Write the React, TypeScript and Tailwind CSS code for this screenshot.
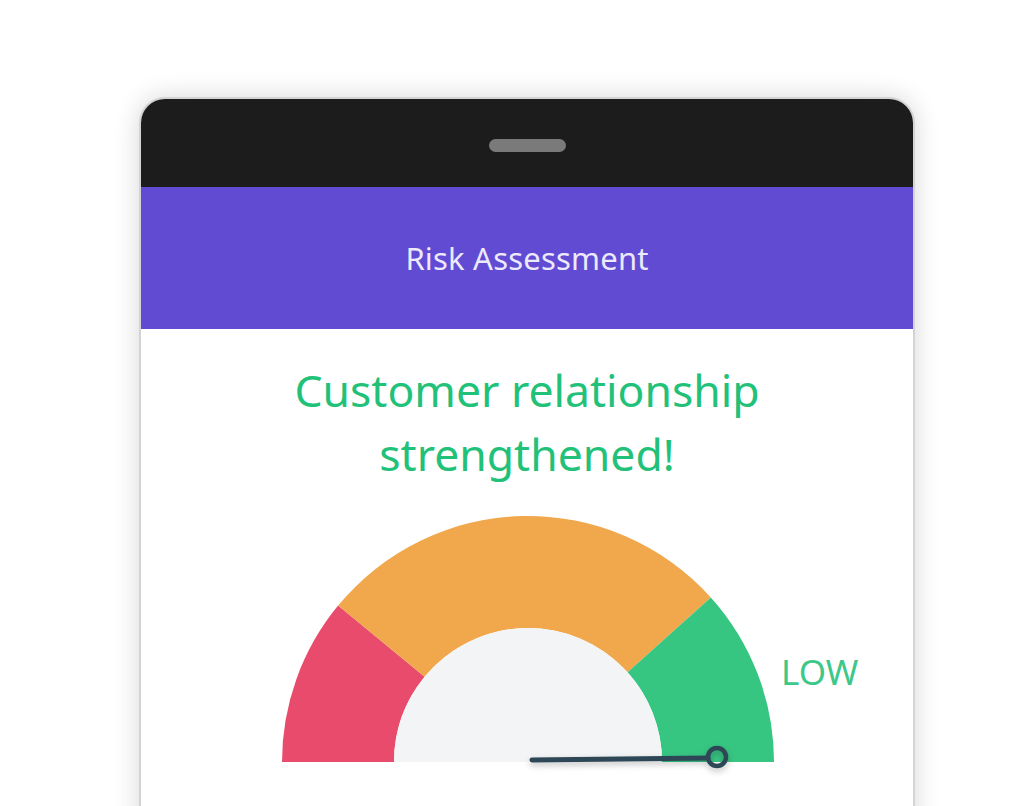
export default function App() {
  return (
    <div className="h-[806px] w-[1024px] overflow-hidden bg-white pt-[97px] font-['Noto_Sans',sans-serif]">
      <div className="ml-[139px] w-[776px] h-[760px] rounded-t-[26px] border-2 border-b-0 border-[#d4d4d4] shadow-[0_0_26px_rgba(0,0,0,0.16)] overflow-hidden bg-white">
        {/* Top bar */}
        <div className="h-[88px] bg-[#1c1c1c] flex items-center justify-center">
          <div className="mt-[4px] w-[77px] h-[13px] rounded-full bg-[#7a7a7a]" />
        </div>

        {/* Header */}
        <div className="h-[142px] bg-[#614bd3] flex items-center justify-center">
          <h1 className="text-[31px] text-[#ece9fb] tracking-[0.2px]">Risk Assessment</h1>
        </div>

        {/* Content */}
        <div className="pt-[29px] flex flex-col items-center">
          <p className="text-[44.5px] leading-[64px] text-[#22c179] text-center">
            Customer relationship
            <br />
            strengthened!
          </p>

          <div className="relative mt-[29px] w-full flex justify-center">
            <svg width="500" height="264" viewBox="0 0 500 264" className="ml-[2px]">
              <defs>
                <filter id="needleShadow" x="-20%" y="-200%" width="140%" height="500%">
                  <feDropShadow dx="0" dy="3" stdDeviation="3" floodColor="#000" floodOpacity="0.25" />
                </filter>
              </defs>
              <path d="M4 247 A246 246 0 0 1 60.1 90.6 L146.6 161.8 A134 134 0 0 0 116 247 Z" fill="#e94b6c" />
              <path d="M60.1 90.6 A246 246 0 0 1 432.8 82.4 L349.6 157.3 A134 134 0 0 0 146.6 161.8 Z" fill="#f1a84c" />
              <path d="M432.8 82.4 A246 246 0 0 1 496 247 L384 247 A134 134 0 0 0 349.6 157.3 Z" fill="#37c582" />
              <path d="M116 247 A134 134 0 0 1 384 247 Z" fill="#f2f4f6" />
              <g filter="url(#needleShadow)">
                <line x1="254" y1="245" x2="430" y2="243" stroke="#2f4656" strokeWidth="5" strokeLinecap="round" />
                <circle cx="439" cy="242" r="9" fill="none" stroke="#2f4656" strokeWidth="4.5" />
              </g>
            </svg>
            <span className="absolute left-[640px] top-[131px] text-[35px] text-[#3dc88a]">LOW</span>
          </div>
        </div>
      </div>
    </div>
  )
}
